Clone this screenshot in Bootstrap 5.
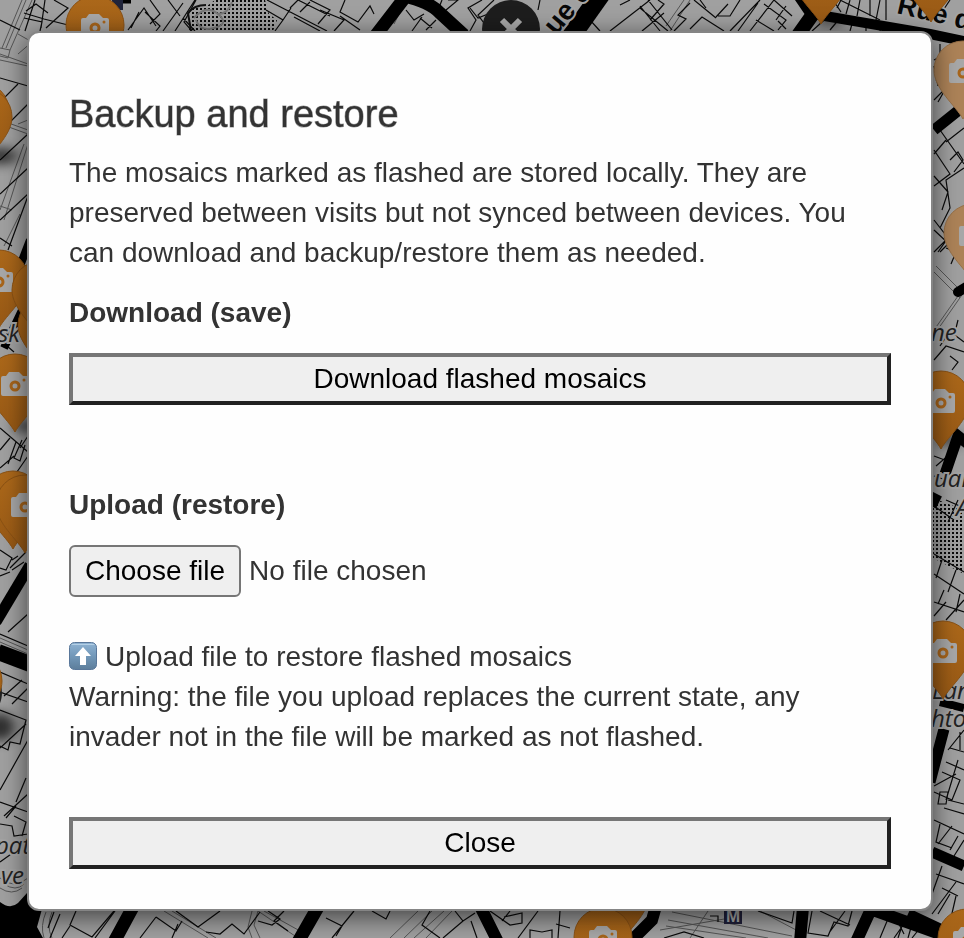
<!DOCTYPE html>
<html lang="en">
<head>
<meta charset="utf-8">
<meta name="viewport" content="width=device-width, initial-scale=1">
<title>Backup and restore</title>
<link href="https://cdn.jsdelivr.net/npm/bootstrap@5.3.0/dist/css/bootstrap.min.css" rel="stylesheet">
<style>
  body { font-family: "Liberation Sans", Arial, sans-serif; font-size: 28px; line-height: 40px; color: #333; background: #a0a0a0; }
  .map-canvas { z-index: 0; }
  .map-canvas text { font-family: "Liberation Sans", Arial, sans-serif; paint-order: stroke; stroke: #a4a4a4; stroke-width: 4px; fill: #080808; }
  .map-canvas .place text { font-family: "Open Sans", sans-serif; font-style: italic; font-size: 24px; fill: #222; }
  .overlay-frame { z-index: 1; padding: 31px 31px 27px 27px; }
  .backup-dialog { border: 2px solid #858585; border-radius: 12px; padding: 40px; box-shadow: 0 6px 26px rgba(0,0,0,.6); background: #fefefe; }
  .dialog-title { font-size: 38px; line-height: 42px; font-weight: 400; margin: 20px 0 18px; -webkit-text-stroke: 1px rgba(51,51,51,.5); }
  .section-title { font-size: 28px; line-height: 40px; margin: 20px 0; }
  .section-gap { margin-top: 80px; }
  .wide-btn { height: 52px; line-height: 40px; padding: 0; border: 4px solid; border-color: #767676 #212121 #212121 #767676; background: #efefef; color: #000; }
  .file-btn { height: 52px; line-height: 48px; padding: 0 14px; border: 2px solid #767676; border-radius: 6px; background: #efefef; color: #000; cursor: pointer; }
  .file-input:focus-visible + .file-btn { outline: 2px solid #0d6efd; }
  .notes { margin: 40px 0 60px; }
  .arrow-icon { width: 28px; height: 28px; margin: 0 8px 6px 0; }
</style>
<script src="https://cdn.jsdelivr.net/npm/bootstrap@5.3.0/dist/js/bootstrap.bundle.min.js"></script>
</head>
<body class="position-relative overflow-hidden">

<svg class="map-canvas position-fixed top-0 start-0 w-100 h-100" viewBox="0 0 964 938" preserveAspectRatio="xMidYMid slice" aria-hidden="true">
  <defs>
    <pattern id="dots" width="4" height="4" patternUnits="userSpaceOnUse"><path d="M0 0h2v2H0z" fill="#0a0a0a"/></pattern>
    <linearGradient id="pinFill" x1="0" y1="0" x2="0" y2="1"><stop offset="0" stop-color="#ac681a"/><stop offset="1" stop-color="#985915"/></linearGradient>
    <path id="pinShape" d="M0 0C-7 -13-29 -30-29 -49A29 29 0 0 1 29 -49C29 -30 7 -13 0 0Z"/>
    <g id="camera">
      <path fill="#a8a8a8" d="M-12-56h3l3-4h10l4 4h4q2 0 2 2v16q0 2-2 2h-24q-2 0-2-2v-16q0-2 2-2z"/>
      <circle cy="-46" r="4" fill="none" stroke="#a8651b" stroke-width="3"/>
      <circle cx="9" cy="-52" r="1.5" fill="#a8651b"/>
    </g>
    <g id="pin"><use href="#pinShape" fill="url(#pinFill)" stroke="#8b5214"/><use href="#camera"/></g>
    <g id="palePin"><use href="#pinShape" fill="#ad8358" stroke="#987047"/><use href="#camera"/></g>
    <filter id="soft" x="-50%" y="-50%" width="200%" height="200%"><feGaussianBlur stdDeviation="6"/></filter>
  </defs>

  <rect width="964" height="938" fill="#a0a0a0"/>

  <!-- pale kerbs -->
  <g fill="none" stroke="#555" stroke-width="1">
    <path d="M22 0L2 48M26 0L6 48M32 0L10 50M0 48l10 2-2 8-8-2M18 34l14 8-14 12M0 54l28 10M0 60l28 6M400 12l-6 12 M690 0l-20 31M684 0l-18 26"/>
    <path d="M0 120l28 10M6 126l22 8M28 144L4 220M24 144L0 210M0 206l12 4M20 214L4 246M28 120l-10 4"/>
    <path d="M0 638l28 12M0 642l28 12M0 878q14 12 28 0M4 884q12 8 20 0M0 888q12 8 22 0M936 266l28 28M934 272l26 26M964 292l-28 40M958 296l-24 34"/>
    <path d="M46 912q-6 14-2 26M52 912q-6 14 0 26M252 911l-4 16 4 11M258 911l-4 14 6 13M164 911l44 27M172 911l44 27M258 911l40 27M264 911l36 20M418 911l-28 27M432 911l-28 27M444 911l-30 27M452 911l-26 27"/>
    <path d="M660 930l70 -12M668 920l100 18M672 912l120 24M690 938l18-27M760 911l38 20M666 926l80 12"/>
  </g>

  <!-- building outlines -->
  <g fill="none" stroke="#0a0a0a" stroke-width="1.2">
    <path d="M24 13l20 6 24 6M26 11l10-7 12 9M45 0l-4 28M54 0l14 8-22 20M24 18l18 4-2 9M35 0l-10 31"/>
    <path d="M128 30l16-22 12 18M139 12l-8 16M145 12l15 14-4 5M150 0l10 14-10 10M163 31l20-28M168 0l12 16M175 31l20-31M183 18l12 13M196 0l-12 22 8 9M266 10l17 10-8 11M267 0l60 31M290 8l8-8 32 16M291 8l-8 12M300 12l10-10M320 31l-26-14M310 0l20 10-12 14"/>
    <path d="M0 20l20 10M320 10l24 10-10 11M345 0l-5 12 18 10 12-16 4 8M360 30l-20-14M406 10l8 10 10-6M412 31l10-14M420 18l12 10M436 20l-10 10M442 0l-4 10M448 0h10l-12 10M470 8l8 10 10-4M482 0l-14 8 8 12-6 11M490 31l-12-16 16-15"/>
    <path d="M540 0l-2 10M620 5l10-5M590 20l10 11M610 31L650 0M642 31l22-18M660 31L640 6M640 8l28 23M648 0l24 30M650 20l14-16-6-4M674 31l12-12-8-4 12-12M690 29l12-12 22 14M694 0l22 18M700 0l6 8M716 17l12-13M730 31l30-31M738 31l20-28M750 31l24-31M756 20l18 11M764 4l22 16-8 10M774 0l18 16M776 20l10-14M740 0l-10 16-12 0M786 29l-8-8M812 31l20-18"/>
    <path d="M833 0l8 12M841 0l-4 8M850 0l-4 14M860 0l-3 16M870 0v16M880 0l-4 20M886 0v20M830 30l10-12M850 31l4-14M866 31v-10M880 31l2-8M840 0l40 20M950 0l-8 12M0 78l28 8M18 84L0 102M28 104L0 132M28 134L0 160M28 168L0 194M0 220l28-26M28 196L8 250M0 238l12 8"/>
    <path d="M28 356l-8 10M0 340l14 12M0 428l28 24M28 436l-8 12M10 438L0 450M16 442l-8 22M22 440l-8 18 6 3 5-16M28 456l-18 26M0 468l14-12M0 550l12 8-6 12-6-2M12 560l6-4M10 568l16-16M24 562l-12 8M0 576l10-4M28 614L8 632"/>
    <path d="M0 634l28 12M0 672l28 12M0 692l28 10M22 680L4 696M28 688L12 704M0 710l26 10-6 24-10-2-2 8-8-4M26 724L0 748M28 740L0 790M26 778l-10 24M0 802l28 10M16 806l-10 12M28 794L4 816M0 824l12 2 2 10 14-2M14 816l12 6-4 14M0 862l14-10"/>
    <path d="M934 60l8-4M940 44v10M934 66l4 20M936 80l10 8-12 12M946 88l-8 14M940 130l24 34M964 128l-18 14M934 150l16 24-16 12M934 154l12-14M950 160l8-8 5 8-9 12M964 168l-18 12 4 28-10 20M934 176l14 16-6 18M934 220l14 18-14 14M948 238l-10 14M940 252l16-16M946 248l10 4-5 12M934 230l30 28"/>
    <path d="M934 360l12-14 18 6M940 346l12-18M948 330l16 12M950 356l8 6-6 8M958 320l-4 16M934 456l16 6M936 466l14-12M934 476l12 4M946 500l18 8M934 506l20 14M958 500l-10 22M934 554l30 18M934 574l30 20M934 602l30 10M942 560l-6 18M956 570l-8 22M944 590l-6 14M960 594l-4 18M934 616l12-14M946 620l18-20"/>
    <path d="M964 730l-16 20M950 748l14 4M946 762l18 8M960 732v18M942 772l18 8-8 20-18-8M958 760l-12 40M934 786l22-12M940 792h8l-2 12h-8zM948 800l16 4M944 808l20 6M934 820l30 14M952 826l-14 18M940 824l-4 18 16 6M958 836l-8 14M964 840l-10 16M942 866l-10 28M936 874l28 10M942 888l16 8M950 894l-12 20M932 914l24-32M956 896l-6 26"/>
    <path d="M54 912l-6 16M76 911l-6 14 22 12 22-26M70 926l-8 12M115 911l-20 27M50 938l10-24M156 917l-16 21M156 917l20 14 6-10M176 911l22 16 22-16M178 924l-6 14M206 932l14 2 12-10 12 10 16-22M220 911l-22 16M284 911l-10 10 14 10M268 911l12 8-8 6-14-4M326 918l16 8-6 10M354 911l-22 27M372 911l14 8 4-8M430 911l-8 14 18 13M455 911l8 10 12-8M463 921l-20 17M471 921l6 17"/>
    <path d="M490 911l20 14 12-2 0-10-18 4M510 911l-8 10M530 938v-8l12 2 10-2v8M538 911l-20 27M560 911l-2 27M556 924l14 4M758 911l34 12 2-12M710 916h8v6M664 938l20-6 20 6M812 911l-4 22 20 3 6-14 14 4 4-15M845 911l-16 22M820 911l30 14M880 938l10-24 14 6-6 18M896 918l8 16M906 921l-12 17M912 924l-4 14M920 928l-8 10"/>
  </g>
  <path d="M191 8l16-2 8-6h50l4 14 8 6-4 11h-84z" fill="url(#dots)"/>
  <path d="M191 31l-3-18q6-8 18-8" fill="none" stroke="#111" stroke-width="2"/>
  <path d="M194 18q12-14 24-4t-4 14q-14 4-18-8M218 14q10 0 14-12" fill="none" stroke="#777" stroke-width="2"/>
  <path d="M938 500l26 10v64l-31-16v-50z" fill="url(#dots)"/>

  <!-- main roads -->
  <g fill="none" stroke="#000">
    <path stroke-width="13" d="M406-4L376 35M404-4Q430 2 440 13L464 35"/>
    <path stroke-width="19" d="M604-10L570 38"/>
    <path stroke-width="14" d="M798-8L813 14 796 38"/>
    <path stroke-width="10" d="M813 14L930 34 968 42"/>
    <path stroke-width="11" d="M115-2h16M934 130L964 106M945 474L958 436 968 444M931 506l6-12M944 729L930 782M932 852l32 14M908 914l34 16"/>
    <path stroke-width="10" stroke-linecap="round" d="M958 292l10-6"/>
    <path stroke-width="11" d="M30 565L-4 622"/>
    <path stroke-width="16" d="M-2 652L30 664"/>
    <path stroke-width="13" d="M133 907L114 942M318 907L298 942"/>
    <path stroke-width="12" d="M480 906L498 942M656 906L652 920 630 942M803 907L800 942M872 907L856 942M876 911L940 934"/>
    <path stroke-width="8" d="M30 240l-10 26M24 306L4 348M940 702l24 6"/>
  </g>
  <path d="M0 902q10 8 18 1l9-10 15 16-5 18 6 11H0z"/>

  <!-- place names -->
  <text x="896" y="13" font-size="27" font-weight="700" transform="rotate(13 896 13)">Rue de</text>
  <text x="556" y="36" font-size="28" font-weight="700" transform="rotate(-50 556 36)">ue d</text>
  <g class="place">
    <text x="-2" y="342">sk</text><text x="-5" y="854">pat</text><text x="1" y="884">ve</text>
    <text x="931" y="341">ne</text><text x="934" y="487">uar</text><text x="956" y="516">A</text>
    <text x="932" y="699">Lan</text><text x="931" y="727">hto</text>
  </g>
  <rect x="724" y="906" width="18" height="18" fill="#20203a"/>
  <text x="726" y="922" font-size="17" font-weight="700" style="fill:#aaa;stroke:none">M</text>

  <!-- pins -->
  <g filter="url(#soft)" opacity=".7"><ellipse cx="0" cy="156" rx="18" ry="8"/><ellipse cx="0" cy="727" rx="15" ry="14"/><ellipse cx="26" cy="426" rx="14" ry="5"/><ellipse cx="830" cy="20" rx="16" ry="5"/><ellipse cx="950" cy="440" rx="14" ry="5"/></g>
  <rect x="112" y="-8" width="11" height="18" fill="#20243a"/>
  <use href="#pin" x="95" y="74"/>
  <circle cx="511" cy="29" r="29" fill="#1d1d1d"/>
  <path d="M502 20L520 38M520 20L502 38" stroke="#a8a8a8" stroke-width="6"/>
  <use href="#pin" x="821" y="24"/><use href="#pin" x="931" y="22"/><use href="#palePin" x="980" y="20"/>
  <use href="#pin" x="-20" y="160"/><use href="#pin" x="-17" y="166"/>
  <use href="#pinShape" x="47" y="374" fill="url(#pinFill)" stroke="#8b5214"/><use href="#pin" x="-1" y="328"/><use href="#pinShape" x="41" y="339" fill="url(#pinFill)" stroke="#8b5214"/>
  <use href="#pin" x="15" y="432"/>
  <use href="#pin" x="13" y="549"/><use href="#pin" x="25" y="553"/>
  <use href="#pinShape" x="-27" y="742" fill="#222"/><use href="#pin" x="-27" y="730"/>
  <use href="#palePin" x="963" y="119"/><use href="#palePin" x="973" y="282"/>
  <use href="#pin" x="941" y="449"/><use href="#pin" x="943" y="699"/>
  <use href="#pin" x="620" y="944"/><use href="#pin" x="603" y="986"/><use href="#pin" x="967" y="987"/>
</svg>

<main class="overlay-frame position-relative min-vh-100">
  <section class="backup-dialog" role="dialog" aria-labelledby="dialog-title">
    <h1 id="dialog-title" class="dialog-title">Backup and restore</h1>
    <p class="mb-0">The mosaics marked as flashed are stored locally. They are preserved between visits but not synced between devices. You can download and backup/restore them as needed.</p>

    <h2 class="section-title fw-bold">Download (save)</h2>
    <button type="button" class="wide-btn d-block w-100">Download flashed mosaics</button>

    <h2 class="section-title section-gap fw-bold">Upload (restore)</h2>
    <div class="d-flex align-items-center gap-2 position-relative">
      <input type="file" id="restore-file" class="file-input visually-hidden">
      <label for="restore-file" class="file-btn">Choose file</label>
      <span>No file chosen</span>
    </div>

    <p class="notes"><svg class="arrow-icon" viewBox="0 0 28 28" role="img" aria-label="Up"><defs><linearGradient id="tile" x1="0" y1="0" x2="0" y2="1"><stop offset="0" stop-color="#8fb3d3"/><stop offset=".5" stop-color="#7298b9"/><stop offset="1" stop-color="#5d7e9b"/></linearGradient></defs><rect x=".5" y=".5" width="27" height="27" rx="5" fill="url(#tile)" stroke="#59779a"/><path d="M3 2.5h22" stroke="#b4d0e6" stroke-linecap="round"/><path d="M14 5l8 9h-5v9h-6v-9H6z" fill="#fff"/></svg>Upload file to restore flashed mosaics<br>Warning: the file you upload replaces the current state, any invader not in the file will be marked as not flashed.</p>

    <button type="button" class="wide-btn d-block w-100">Close</button>
  </section>
</main>
</body>
</html>
